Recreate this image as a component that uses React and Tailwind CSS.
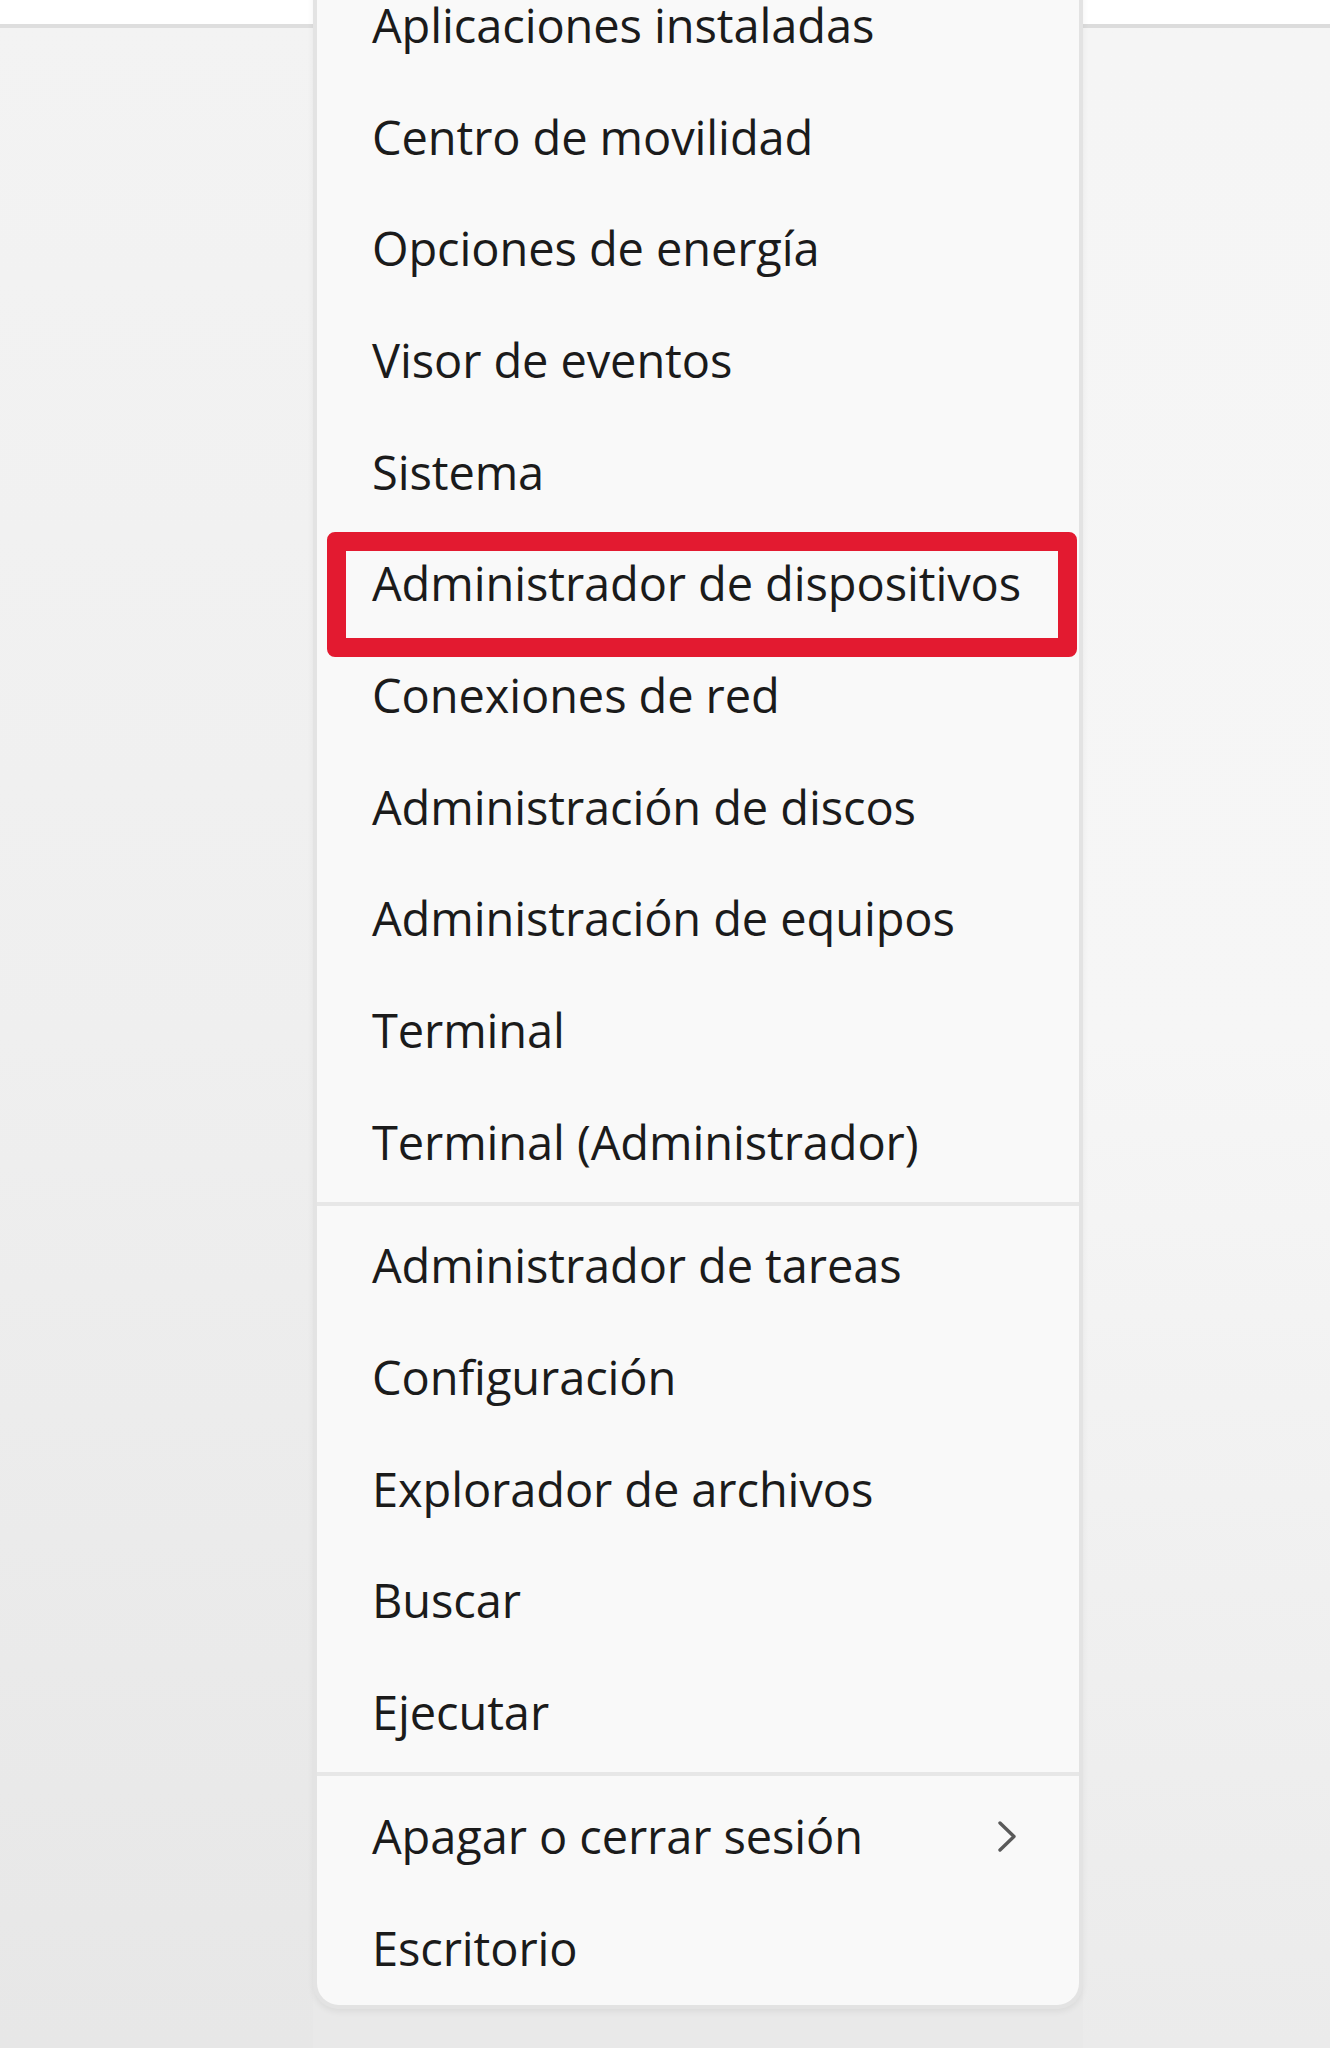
import React from "react";

const group1 = [
  "Aplicaciones instaladas",
  "Centro de movilidad",
  "Opciones de energía",
  "Visor de eventos",
  "Sistema",
  "Administrador de dispositivos",
  "Conexiones de red",
  "Administración de discos",
  "Administración de equipos",
  "Terminal",
  "Terminal (Administrador)",
];
const group2 = [
  "Administrador de tareas",
  "Configuración",
  "Explorador de archivos",
  "Buscar",
  "Ejecutar",
];

function Row({ label, highlight, chevron }) {
  return (
    <div className="relative flex h-[111.7px] items-center justify-between pl-[55px] pb-[3px]">
      <span className="leading-none text-[47px] text-[#1b1b1b] tracking-[-0.1px] whitespace-nowrap">
        {label}
      </span>
      {chevron && (
        <svg
          className="mr-[63px] mt-[-1px]"
          width="18"
          height="32"
          viewBox="0 0 18 32"
          fill="none"
        >
          <polyline
            points="2,3 16,16.5 2,30"
            stroke="#5a5a5a"
            strokeWidth="3.4"
            strokeLinecap="round"
            strokeLinejoin="round"
          />
        </svg>
      )}
      {highlight && (
        <div className="pointer-events-none absolute left-[10px] right-[2px] top-[3px] h-[125px] rounded-[8px] border-[19px] border-[#e31a30]" />
      )}
    </div>
  );
}

function Separator() {
  return (
    <div className="pt-[2px] pb-[6px]">
      <div className="h-[4px] bg-[#e7e7e7]" />
    </div>
  );
}

export default function App() {
  return (
    <div
      className="flex h-[2048px] w-full overflow-hidden bg-[#e9e9e9]"
      style={{ fontFamily: '"Open Sans", "Noto Sans", sans-serif' }}
    >
      {/* left background */}
      <div className="flex w-[313px] shrink-0 flex-col">
        <div className="h-[24px] bg-white" />
        <div className="h-[4px] bg-[#dedede]" />
        <div className="flex-1 bg-gradient-to-b from-[#f3f3f3] via-[#efefef] to-[#e7e7e7]" />
      </div>

      {/* menu */}
      <div className="relative z-10 mt-[-29px] w-[770px] shrink-0 self-start">
        <div className="rounded-b-[26px] border-x-[4px] border-b-[4px] border-[#e3e3e3] bg-[#f9f9f9] shadow-[0_3px_6px_rgba(0,0,0,0.06)]">
          {group1.map((l) => (
            <Row
              key={l}
              label={l}
              highlight={l === "Administrador de dispositivos"}
            />
          ))}
          <Separator />
          {group2.map((l) => (
            <Row key={l} label={l} />
          ))}
          <Separator />
          <Row label="Apagar o cerrar sesión" chevron />
          <Row label="Escritorio" />
        </div>
      </div>

      {/* right background */}
      <div className="flex flex-1 flex-col">
        <div className="h-[24px] bg-white" />
        <div className="h-[4px] bg-[#dcdcdc]" />
        <div className="flex-1 bg-gradient-to-b from-[#f5f5f5] via-[#f6f6f6] to-[#ebebeb]" />
      </div>
    </div>
  );
}
